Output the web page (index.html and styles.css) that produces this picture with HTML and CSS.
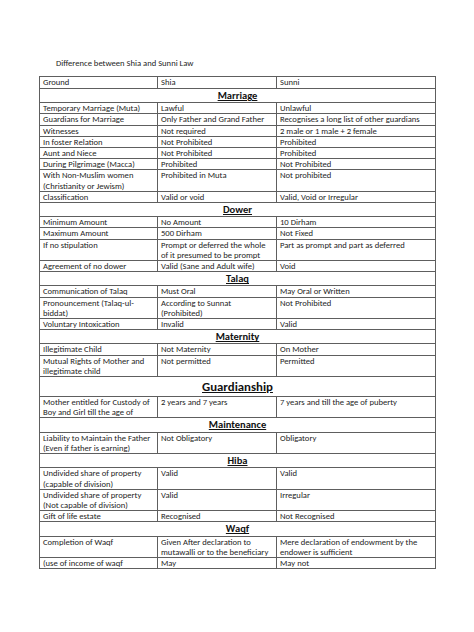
FILE: index.html
```html
<!DOCTYPE html>
<html>
<head>
<meta charset="utf-8">
<link rel="stylesheet" href="styles.css">
</head>
<body>
<div class="page">
  <p class="title">Difference between Shia and Sunni Law</p>
  <table class="law">
    <colgroup><col class="c1"><col class="c2"><col class="c3"></colgroup>
    <tr class="head"><td>Ground</td><td>Shia</td><td>Sunni</td></tr>
    <tr class="sect"><td colspan="3"><span>Marriage</span></td></tr>
    <tr><td>Temporary Marriage (Muta)</td><td>Lawful</td><td>Unlawful</td></tr>
    <tr><td>Guardians for Marriage</td><td>Only Father and Grand Father</td><td>Recognises a long list of other guardians</td></tr>
    <tr><td>Witnesses</td><td>Not required</td><td>2 male or 1 male + 2 female</td></tr>
    <tr><td>In foster Relation</td><td>Not Prohibited</td><td>Prohibited</td></tr>
    <tr><td>Aunt and Niece</td><td>Not Prohibited</td><td>Prohibited</td></tr>
    <tr><td>During Pilgrimage (Macca)</td><td>Prohibited</td><td>Not Prohibited</td></tr>
    <tr><td>With Non-Muslim women<br>(Christianity or Jewism)</td><td>Prohibited in Muta</td><td>Not prohibited</td></tr>
    <tr><td>Classification</td><td>Valid or void</td><td>Valid, Void or Irregular</td></tr>
    <tr class="sect"><td colspan="3"><span>Dower</span></td></tr>
    <tr><td>Minimum Amount</td><td>No Amount</td><td>10 Dirham</td></tr>
    <tr><td>Maximum Amount</td><td>500 Dirham</td><td>Not Fixed</td></tr>
    <tr><td>If no stipulation</td><td>Prompt or deferred the whole<br>of it presumed to be prompt</td><td>Part as prompt and part as deferred</td></tr>
    <tr><td>Agreement of no dower</td><td>Valid (Sane and Adult wife)</td><td>Void</td></tr>
    <tr class="sect"><td colspan="3"><span>Talaq</span></td></tr>
    <tr><td>Communication of Talaq</td><td>Must Oral</td><td>May Oral or Written</td></tr>
    <tr><td>Pronouncement (Talaq-ul-<br>biddat)</td><td>According to Sunnat<br>(Prohibited)</td><td>Not Prohibited</td></tr>
    <tr><td>Voluntary Intoxication</td><td>Invalid</td><td>Valid</td></tr>
    <tr class="sect"><td colspan="3"><span>Maternity</span></td></tr>
    <tr><td>Illegitimate Child</td><td>Not Maternity</td><td>On Mother</td></tr>
    <tr><td>Mutual Rights of Mother and<br>illegitimate child</td><td>Not permitted</td><td>Permitted</td></tr>
    <tr class="sect big"><td colspan="3"><span>Guardianship</span></td></tr>
    <tr><td>Mother entitled for Custody of<br>Boy and Girl till the age of</td><td>2 years and 7 years</td><td>7 years and till the age of puberty</td></tr>
    <tr class="sect"><td colspan="3"><span>Maintenance</span></td></tr>
    <tr><td>Liability to Maintain the Father<br>(Even if father is earning)</td><td>Not Obligatory</td><td>Obligatory</td></tr>
    <tr class="sect"><td colspan="3"><span>Hiba</span></td></tr>
    <tr><td>Undivided share of property<br>(capable of division)</td><td>Valid</td><td>Valid</td></tr>
    <tr><td>Undivided share of property<br>(Not capable of division)</td><td>Valid</td><td>Irregular</td></tr>
    <tr><td>Gift of life estate</td><td>Recognised</td><td>Not Recognised</td></tr>
    <tr class="sect"><td colspan="3"><span>Waqf</span></td></tr>
    <tr><td>Completion of Waqf</td><td>Given After declaration to<br>mutawalli or to the beneficiary</td><td>Mere declaration of endowment by the<br>endower is sufficient</td></tr>
    <tr><td>(use of income of waqf</td><td>May</td><td>May not</td></tr>
  </table>
</div>
</body>
</html>
```

FILE: styles.css
```css
html, body {
  margin: 0;
  padding: 0;
  background: #fff;
}
.page {
  padding: 58px 0 0 39px;
  font-family: Carlito, Lato, "Liberation Sans", sans-serif;
  color: #1c1c1c;
  font-size: 8.6px;
}
.title {
  margin: 0 0 7px 17px;
  line-height: 11px;
}
.law {
  border-collapse: collapse;
  table-layout: fixed;
  width: 396px;
}
.c1 { width: 118px; }
.c2 { width: 119px; }
.c3 { width: 159px; }
.law td {
  border: 1px solid #5e5e5e;
  padding: 0 3px;
  line-height: 10.2px;
  vertical-align: top;
  white-space: nowrap;
  overflow: hidden;
}
.law .head td {
  line-height: 11px;
}
.law .sect td {
  text-align: center;
  font-weight: bold;
  font-size: 10.5px;
  line-height: 13.2px;
  color: #111;
}
.law .sect span {
  text-decoration: underline;
}
.law .sect.big td {
  font-size: 12.8px;
  line-height: 19px;
}
```
